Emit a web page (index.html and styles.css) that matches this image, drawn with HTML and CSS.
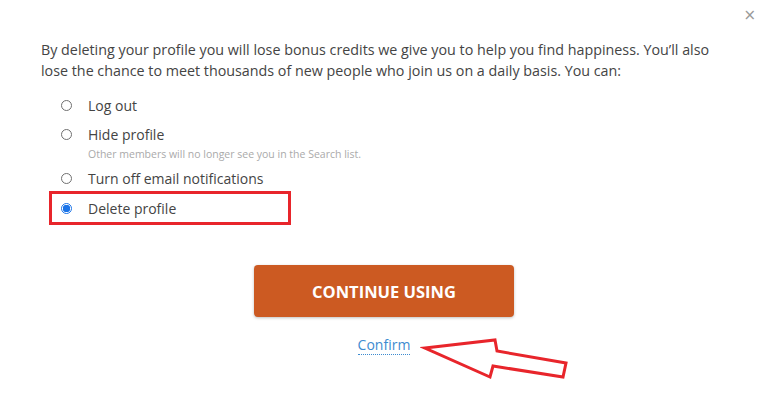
FILE: index.html
```html
<!DOCTYPE html>
<html>
<head>
<meta charset="utf-8">
<link rel="stylesheet" href="styles.css">
</head>
<body>
<div class="modal">
  <button class="close" aria-label="Close">&times;</button>
  <p class="intro">By deleting your profile you will lose bonus credits we give you to help you find happiness. You’ll also<br>lose the chance to meet thousands of new people who join us on a daily basis. You can:</p>
  <div class="options">
    <label class="option opt-logout"><span class="radio"></span><span class="label">Log out</span></label>
    <div class="option-group">
      <label class="option opt-hide"><span class="radio"></span><span class="label">Hide profile</span></label>
      <div class="hint">Other members will no longer see you in the Search list.</div>
    </div>
    <label class="option opt-email"><span class="radio"></span><span class="label">Turn off email notifications</span></label>
    <label class="option opt-delete highlight"><span class="radio checked"></span><span class="label">Delete profile</span></label>
  </div>
  <div class="actions">
    <button class="continue">CONTINUE USING</button>
    <a class="confirm" href="#">Confirm</a>
  </div>
  <svg class="arrow" width="160" height="50" viewBox="420 335 160 50">
    <polygon points="425,348 495,340 497,351 566,363 563,377 493,366 490,377" fill="none" stroke="#e8252b" stroke-width="3" stroke-linejoin="miter"/>
  </svg>
</div>
</body>
</html>
```
FILE: styles.css
```css
* { box-sizing: border-box; }
html, body { margin: 0; padding: 0; background: #fff; }
body { font-family: "Open Sans", "Liberation Sans", sans-serif; color: #444; }
.modal { position: relative; width: 768px; height: 398px; padding: 39px 0 0 41px; }
.close { position: absolute; top: 6px; right: 12px; border: 0; background: none; color: #999; font-size: 15px; padding: 0; font-family: "DejaVu Sans", sans-serif; cursor: pointer; }
.intro { margin: 0; font-size: 14.3px; line-height: 21px; white-space: nowrap; }
.options { margin: 10px 0 0 8px; display: flex; flex-direction: column; }
.option { display: flex; align-items: center; height: 29px; padding-left: 12px; font-size: 14px; color: #444; }
.option-group { display: flex; flex-direction: column; }
.hint { font-size: 10.5px; color: #aaa; padding-left: 39px; margin-top: -2px; line-height: 14px; }
.opt-email { margin-top: 3px; }
.radio { width: 11px; height: 11px; border: 1px solid #707070; border-radius: 50%; margin-right: 16px; flex: none; }
.radio.checked { border-color: #1a73e8; background: radial-gradient(circle, #1a73e8 0 3.5px, #fff 4px); }
.highlight { border: 3px solid #e8252b; width: 242px; height: 34px; padding-left: 9px; margin-top: -2px; }
.actions { display: flex; flex-direction: column; align-items: center; margin: 40px 0 0 -41px; }
.continue { width: 260px; height: 52px; border: 0; border-radius: 4px; background: #cc5a22; color: #fff; font-family: "Open Sans", sans-serif; font-weight: 700; font-size: 16.5px; box-shadow: 0 1px 3px rgba(0,0,0,0.25); cursor: pointer; }
.confirm { margin-top: 19px; font-size: 14px; color: #3d8bd0; text-decoration: none; border-bottom: 1px dotted #3d8bd0; line-height: 18px; }
.arrow { position: absolute; left: 420px; top: 335px; }
```
